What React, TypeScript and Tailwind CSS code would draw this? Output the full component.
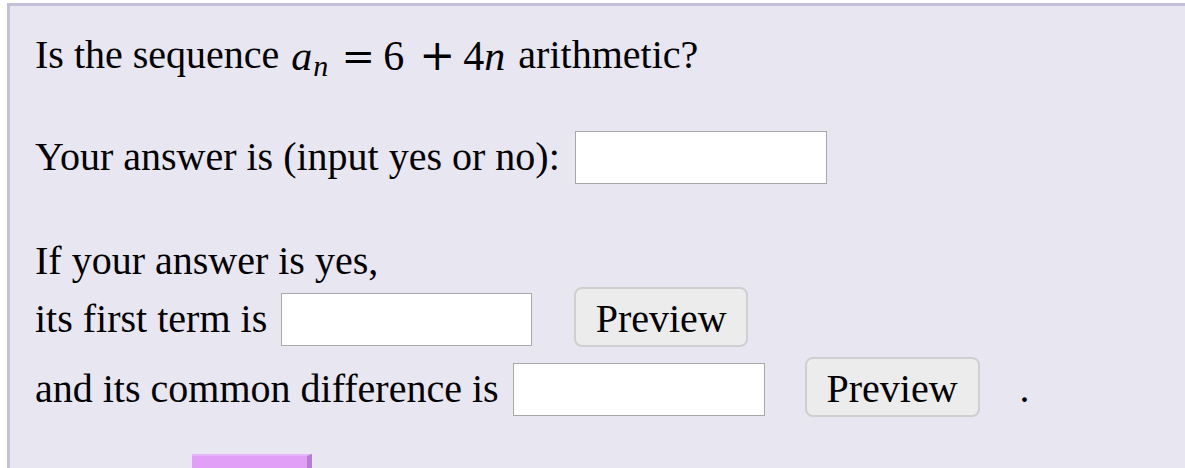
export default function App() {
  const serif = { fontFamily: '"Liberation Serif", "Times New Roman", serif' };
  const sign = { fontFamily: '"DejaVu Serif", serif' };
  return (
    <div className="h-[468px] w-full overflow-hidden bg-white" style={serif}>
      <div className="ml-[7px] mt-[3px] h-[600px] border-l-[3px] border-t-[3px] border-[#c4c0dc] bg-[#e8e6f1] pl-[25px] text-[40px] text-black">
        {/* question with inline math */}
        <div className="mt-[19px] flex h-[60px] items-center whitespace-nowrap">
          <span>Is the sequence</span>
          <span className="ml-[12px] flex items-baseline">
            <span className="inline-block w-[22px] text-[42px] italic">a</span>
            <span className="relative top-[6px] inline-block w-[18px] text-[30px] italic">n</span>
            <span className="ml-[2px] inline-block w-[50px] text-center text-[40px]" style={sign}>=</span>
            <span className="inline-block w-[18px] text-center text-[42px]">6</span>
            <span className="ml-[10px] inline-block w-[52px] text-center text-[43px]" style={sign}>+</span>
            <span className="inline-block w-[21px] text-center text-[42px]">4</span>
            <span className="inline-block w-[24px] text-[42px] italic">n</span>
          </span>
          <span className="ml-[10px]">arithmetic?</span>
        </div>

        {/* yes / no */}
        <div className="mt-[42px] flex h-[60px] items-center whitespace-nowrap">
          <span>Your answer is (input yes or no):</span>
          <input className="ml-[15px] h-[53px] w-[252px] border border-[#a9a9a9] bg-white" />
        </div>

        <div className="mt-[45px] flex h-[57px] items-center whitespace-nowrap">
          If your answer is yes,
        </div>

        <div className="flex h-[60px] items-center whitespace-nowrap">
          <span>its first term is</span>
          <input className="ml-[14px] h-[53px] w-[251px] border border-[#a9a9a9] bg-white" />
          <button className="relative -top-[2px] ml-[42px] h-[60px] w-[174px] rounded-[8px] border-2 border-[#cfcfcf] bg-[#ececec] text-[40px]">
            Preview
          </button>
        </div>

        <div className="mt-[10px] flex h-[60px] items-center whitespace-nowrap">
          <span>and its common difference is</span>
          <input className="ml-[14px] h-[53px] w-[252px] border border-[#a9a9a9] bg-white" />
          <button className="relative -top-[2px] ml-[40px] h-[60px] w-[175px] rounded-[8px] border-2 border-[#cfcfcf] bg-[#ececec] text-[40px]">
            Preview
          </button>
          <span className="ml-[40px]">.</span>
        </div>

        {/* submit button, cut off by the window */}
        <div className="ml-[157px] mt-[35px] h-[30px] w-[120px] border-r-[5px] border-t-[2px] border-r-[#b27fd0] border-t-[#e6b4fa] bg-[#e19ff7]" />
      </div>
    </div>
  );
}
